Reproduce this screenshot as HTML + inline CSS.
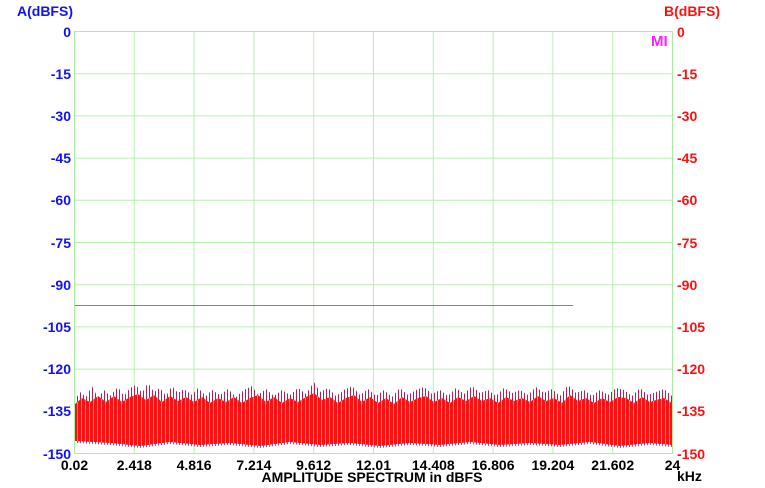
<!DOCTYPE html>
<html><head><style>
html,body{margin:0;padding:0;background:#fff;width:765px;height:488px;overflow:hidden}
svg text{font-family:"Liberation Sans",Arial,sans-serif;font-weight:bold}
</style></head><body>
<svg width="765" height="488" xmlns="http://www.w3.org/2000/svg">
<defs>
<pattern id="st" x="74" y="0" width="4" height="10" patternUnits="userSpaceOnUse">
<rect x="0" y="0" width="4" height="10" fill="#ff8080"/>
<rect x="0" y="0" width="3" height="10" fill="#ff1010"/>
</pattern>
<pattern id="tp" x="74" y="0" width="3" height="10" patternUnits="userSpaceOnUse">
<rect x="0" y="0" width="1" height="10" fill="#b02060"/>
</pattern>
<pattern id="bp" x="74" y="0" width="3" height="10" patternUnits="userSpaceOnUse">
<rect x="0" y="0" width="1" height="10" fill="#6060f0"/>
</pattern>
</defs>
<g stroke="#b8f0b0" stroke-width="1">
<line x1="134.3" y1="31.5" x2="134.3" y2="453.5"/><line x1="194.1" y1="31.5" x2="194.1" y2="453.5"/>
<line x1="253.9" y1="31.5" x2="253.9" y2="453.5"/><line x1="313.7" y1="31.5" x2="313.7" y2="453.5"/>
<line x1="373.5" y1="31.5" x2="373.5" y2="453.5"/><line x1="433.3" y1="31.5" x2="433.3" y2="453.5"/>
<line x1="493.1" y1="31.5" x2="493.1" y2="453.5"/><line x1="552.9" y1="31.5" x2="552.9" y2="453.5"/>
<line x1="612.7" y1="31.5" x2="612.7" y2="453.5"/>
<line x1="74.5" y1="73.7" x2="672.5" y2="73.7"/><line x1="74.5" y1="115.9" x2="672.5" y2="115.9"/>
<line x1="74.5" y1="158.1" x2="672.5" y2="158.1"/><line x1="74.5" y1="200.3" x2="672.5" y2="200.3"/>
<line x1="74.5" y1="242.5" x2="672.5" y2="242.5"/><line x1="74.5" y1="284.7" x2="672.5" y2="284.7"/>
<line x1="74.5" y1="326.9" x2="672.5" y2="326.9"/><line x1="74.5" y1="369.1" x2="672.5" y2="369.1"/>
<line x1="74.5" y1="411.3" x2="672.5" y2="411.3"/>
</g>
<polygon fill="url(#bp)" points="75,405 672,405 672,447 650,445 620,448 590,444 560,447 530,445 500,447 470,444 440,447 410,445 380,448 350,445 320,447 290,444 260,448 230,445 200,447 170,444 140,448 110,445 75,443"/>
<polygon fill="url(#tp)" points="75,400 80,392 86,397 92,386 98,398 104,390 110,396 118,387 124,396 130,388 136,385 142,393 148,383 154,392 160,388 166,396 172,386 178,393 184,389 192,395 198,388 206,396 212,390 220,395 228,389 236,397 244,390 252,386 258,395 266,389 274,396 282,390 290,395 298,388 306,394 314,382 320,392 328,388 336,396 344,390 352,386 360,395 368,389 376,396 384,390 392,397 400,388 408,395 416,390 424,387 432,394 440,390 448,396 456,388 464,394 472,386 480,393 488,390 496,396 504,388 512,393 520,390 528,395 536,387 544,393 552,389 560,396 568,385 576,393 584,390 592,396 600,390 608,395 616,388 624,390 632,396 640,388 648,395 656,392 664,389 672,396 672,410 75,410"/>
<polygon fill="url(#st)" points="75,404 82,398 90,402 98,396 106,402 114,396 122,402 130,397 138,394 146,400 154,395 162,402 170,396 178,401 186,397 194,402 202,397 210,403 218,398 226,402 234,397 242,403 250,398 258,395 266,402 274,397 282,403 290,398 298,402 306,397 314,393 322,400 330,397 338,403 346,398 354,395 362,402 370,397 378,403 386,398 394,404 402,397 410,402 418,398 426,396 434,402 442,398 450,403 458,397 466,401 474,396 482,401 490,398 498,403 506,397 514,401 522,398 530,402 538,396 546,401 554,398 562,403 570,395 578,401 586,398 594,403 602,398 610,402 618,397 626,398 634,403 642,397 650,402 656,400 664,398 672,403 672,445 650,443 620,446 590,442 560,445 530,443 500,445 470,442 440,445 410,443 380,446 350,443 320,445 290,442 260,446 230,443 200,445 170,442 140,446 110,443 75,441"/>
<line x1="74" y1="305.5" x2="573" y2="305.5" stroke="#a070a0" stroke-width="1"/>
<rect x="74.5" y="31.5" width="598" height="422" fill="none" stroke="#a8f0a0" stroke-width="1"/>
<text x="17" y="16" font-size="14" fill="#1010ff">A(dBFS)</text>
<text x="664" y="16" font-size="14" fill="#ff1010">B(dBFS)</text>
<text x="651" y="46" font-size="15" fill="#ff20ff">MI</text>
<g font-size="14" fill="#1010ff" text-anchor="end">
<text x="71" y="37">0</text><text x="71" y="79">-15</text><text x="71" y="121">-30</text><text x="71" y="163">-45</text>
<text x="71" y="205">-60</text><text x="71" y="248">-75</text><text x="71" y="290">-90</text><text x="71" y="332">-105</text>
<text x="71" y="374">-120</text><text x="71" y="416">-135</text><text x="71" y="459">-150</text>
</g>
<g font-size="14" fill="#ff1010">
<text x="677" y="37">0</text><text x="677" y="79">-15</text><text x="677" y="121">-30</text><text x="677" y="163">-45</text>
<text x="677" y="205">-60</text><text x="677" y="248">-75</text><text x="677" y="290">-90</text><text x="677" y="332">-105</text>
<text x="677" y="374">-120</text><text x="677" y="416">-135</text><text x="677" y="459">-150</text>
</g>
<g font-size="14" fill="#000" text-anchor="middle">
<text x="74.5" y="470">0.02</text><text x="134.3" y="470">2.418</text><text x="194.1" y="470">4.816</text>
<text x="253.9" y="470">7.214</text><text x="313.7" y="470">9.612</text><text x="373.5" y="470">12.01</text>
<text x="433.3" y="470">14.408</text><text x="493.1" y="470">16.806</text><text x="552.9" y="470">19.204</text>
<text x="612.7" y="470">21.602</text><text x="672.5" y="470">24</text>
</g>
<text x="677" y="481" font-size="14" fill="#000">kHz</text>
<text x="372" y="482" font-size="14" fill="#000" text-anchor="middle">AMPLITUDE SPECTRUM in dBFS</text>
</svg>
</body></html>
